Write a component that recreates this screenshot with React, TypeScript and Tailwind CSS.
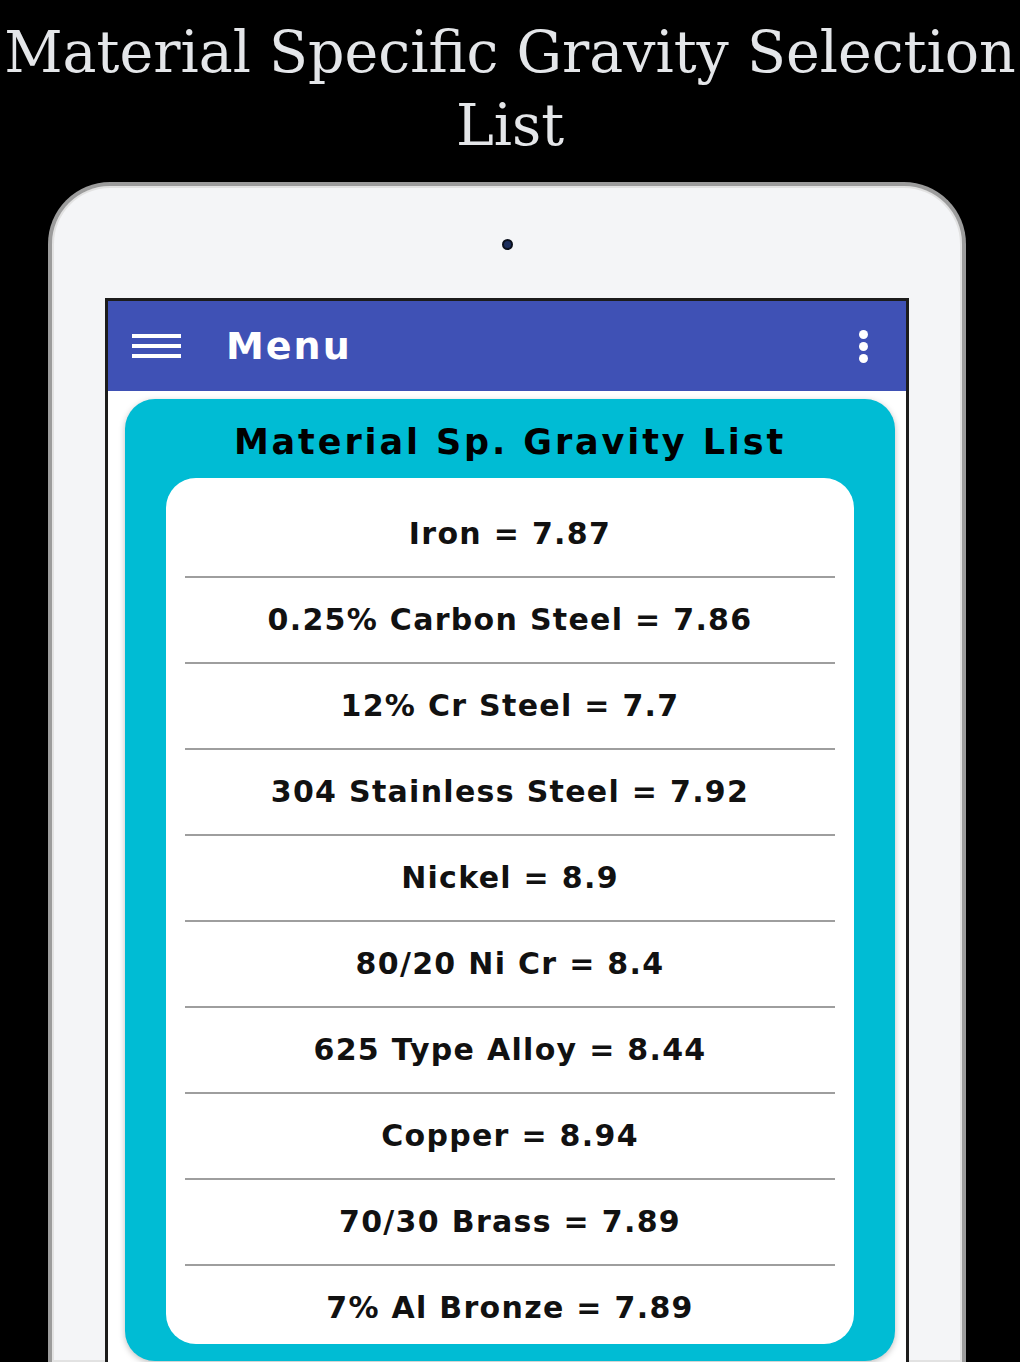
import React from "react";

const items = [
  "Iron = 7.87",
  "0.25% Carbon Steel = 7.86",
  "12% Cr Steel = 7.7",
  "304 Stainless Steel = 7.92",
  "Nickel = 8.9",
  "80/20 Ni Cr = 8.4",
  "625 Type Alloy = 8.44",
  "Copper = 8.94",
  "70/30 Brass = 7.89",
  "7% Al Bronze = 7.89",
];

export default function App() {
  return (
    <div className="w-[1020px] h-[1362px] bg-black overflow-hidden flex flex-col">
      <div
        className="h-[182px] shrink-0 pt-[16px] text-center text-[#e4e6e9] text-[57px] leading-[73px]"
        style={{ fontFamily: '"DejaVu Serif", serif' }}
      >
        <div className="whitespace-nowrap">Material Specific Gravity Selection</div>
        <div>List</div>
      </div>

      <div className="ml-[48px] w-[918px] flex-1 flex flex-col rounded-t-[62px] border-[4px] border-b-0 border-[#9c9c9c] bg-[#f4f5f7] shadow-[inset_0_0_0_2px_#e2e2e2]">
        <div className="pt-[53px] flex justify-center">
          <div className="w-[11px] h-[11px] rounded-full bg-[#1b2d5c] border-[2px] border-[#0a0f1c]" />
        </div>

        <div
          className="mt-[48px] mx-[53px] flex-1 flex flex-col border-[3px] border-b-0 border-[#1c1c1c] bg-white"
          style={{ fontFamily: '"DejaVu Sans", sans-serif' }}
        >
          <div className="h-[90px] shrink-0 bg-[#3f51b5] flex items-center pl-[24px] pr-[38px]">
            <div className="flex flex-col gap-[6px] w-[49px]">
              <div className="h-[4px] bg-white" />
              <div className="h-[4px] bg-white" />
              <div className="h-[4px] bg-white" />
            </div>
            <div className="ml-[45px] text-white font-bold text-[38px] leading-none tracking-[2px]">
              Menu
            </div>
            <div className="ml-auto flex flex-col gap-[3px] items-center">
              <div className="w-[9px] h-[9px] rounded-full bg-white" />
              <div className="w-[9px] h-[9px] rounded-full bg-white" />
              <div className="w-[9px] h-[9px] rounded-full bg-white" />
            </div>
          </div>

          <div className="mt-[8px] ml-[17px] mr-[11px] rounded-[30px] bg-[#00bcd4] pb-[17px] shadow-[0_2px_6px_rgba(0,0,0,0.25)]">
            <div className="h-[79px] pt-[8px] flex items-center justify-center">
              <div className="text-black font-bold text-[35px] leading-none tracking-[2.9px] whitespace-nowrap">
                Material Sp. Gravity List
              </div>
            </div>
            <div className="mx-[41px] h-[866px] overflow-hidden rounded-[30px] bg-white pt-[14px]">
              {items.map((t, i) => (
                <div key={t} className="flex flex-col">
                  <div className="h-[84px] flex items-center justify-center">
                    <span className="text-[#111111] font-bold text-[30px] leading-none tracking-[1.3px] whitespace-nowrap">
                      {t}
                    </span>
                  </div>
                  {i < items.length - 1 && (
                    <div className="mx-[19px] h-[2px] bg-[#9e9e9e]" />
                  )}
                </div>
              ))}
            </div>
          </div>
        </div>
      </div>
    </div>
  );
}
